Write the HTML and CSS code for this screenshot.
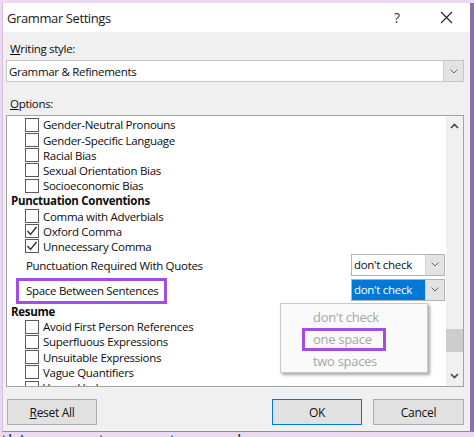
FILE: index.html
```html
<!DOCTYPE html>
<html>
<head>
<meta charset="utf-8">
<title>Grammar Settings</title>
<link rel="stylesheet" href="styles.css">
</head>
<body>
<div class="dialog">
  <div class="titlebar">
    <span class="title">Grammar Settings</span>
    <span class="help">?</span>
    <svg class="close" width="13" height="13" viewBox="0 0 13 13"><path d="M1 1L12 12M12 1L1 12" stroke="#222" stroke-width="1.1" fill="none"/></svg>
  </div>
  <div class="content">
    <div class="label label-style"><u>W</u>riting style:</div>
    <div class="select">
      <span class="select-text">Grammar &amp; Refinements</span>
      <span class="select-btn"><svg width="8" height="5" viewBox="0 0 8 5"><path d="M0.5 0.5L4 4L7.5 0.5" stroke="#666" stroke-width="1" fill="none"/></svg></span>
    </div>
    <div class="label label-options"><u>O</u>ptions:</div>
    <div class="listbox">
      <div class="list">
        <div class="row"><span class="cb"></span>Gender-Neutral Pronouns</div>
        <div class="row"><span class="cb"></span>Gender-Specific Language</div>
        <div class="row"><span class="cb"></span>Racial Bias</div>
        <div class="row"><span class="cb"></span>Sexual Orientation Bias</div>
        <div class="row"><span class="cb"></span>Socioeconomic Bias</div>
        <div class="row heading">Punctuation Conventions</div>
        <div class="row"><span class="cb"></span>Comma with Adverbials</div>
        <div class="row"><span class="cb"><svg width="12" height="12" viewBox="0 0 12 12"><path d="M1.5 6L4.5 9.5L10.5 2" stroke="#333" stroke-width="1.4" fill="none"/></svg></span>Oxford Comma</div>
        <div class="row"><span class="cb"><svg width="12" height="12" viewBox="0 0 12 12"><path d="M1.5 6L4.5 9.5L10.5 2" stroke="#333" stroke-width="1.4" fill="none"/></svg></span>Unnecessary Comma</div>
        <div class="row combo-row">
          <span class="combo-label">Punctuation Required With Quotes</span>
          <span class="combo"><span class="combo-text">don't check</span><span class="combo-btn"><svg width="8" height="5" viewBox="0 0 8 5"><path d="M0.5 0.5L4 4L7.5 0.5" stroke="#666" stroke-width="1" fill="none"/></svg></span></span>
        </div>
        <div class="row combo-row">
          <span class="combo-label highlight">Space Between Sentences</span>
          <span class="combo"><span class="combo-text selected">don't check</span><span class="combo-btn"><svg width="8" height="5" viewBox="0 0 8 5"><path d="M0.5 0.5L4 4L7.5 0.5" stroke="#666" stroke-width="1" fill="none"/></svg></span></span>
        </div>
        <div class="row heading">Resume</div>
        <div class="row"><span class="cb"></span>Avoid First Person References</div>
        <div class="row"><span class="cb"></span>Superfluous Expressions</div>
        <div class="row"><span class="cb"></span>Unsuitable Expressions</div>
        <div class="row"><span class="cb"></span>Vague Quantifiers</div>
        <div class="row"><span class="cb"></span>Vague Hedges</div>
      </div>
      <div class="scrollbar">
        <span class="arrow"><svg width="9" height="6" viewBox="0 0 9 6"><path d="M1 5L4.5 1.5L8 5" stroke="#444" stroke-width="1.6" fill="none"/></svg></span>
        <span class="thumb"></span>
        <span class="arrow arrow-down"><svg width="9" height="6" viewBox="0 0 9 6"><path d="M1 1L4.5 4.5L8 1" stroke="#444" stroke-width="1.6" fill="none"/></svg></span>
      </div>
      <div class="popup">
        <div class="popup-item"><span>don't check</span></div>
        <div class="popup-item"><span class="hl">one space</span></div>
        <div class="popup-item"><span>two spaces</span></div>
      </div>
    </div>
    <div class="buttons">
      <button class="btn btn-reset"><u>R</u>eset All</button>
      <button class="btn btn-ok">OK</button>
      <button class="btn btn-cancel">Cancel</button>
    </div>
  </div>
</div>
<div class="underlay">this prompt errors to you due</div>
</body>
</html>
```

FILE: styles.css
```css
html, body {
  margin: 0;
  padding: 0;
}
body {
  width: 474px;
  height: 437px;
  overflow: hidden;
  background: #ead9f1;
  font-family: "Open Sans", "Noto Sans", sans-serif;
  color: #0d0d0d;
}
.dialog {
  margin: 3px 0 0 2px;
  width: 467px;
  height: 428px;
  border-left: 1px solid #d4c0e0;
  border-right: 4px solid #8e70a9;
  border-bottom: 1px solid #9a7fb6;
  background: #f0f0f0;
  display: flex;
  flex-direction: column;
}
.titlebar {
  height: 29px;
  background: #fff;
  display: flex;
  align-items: center;
  flex-shrink: 0;
}
.title {
  margin-left: 4px;
  font-size: 13px;
  letter-spacing: -0.4px;
  color: #1a1a1a;
  flex: 1;
}
.help {
  font-size: 14px;
  color: #333;
  margin-right: 40px;
}
.close {
  margin-right: 17px;
}
.content {
  padding: 0 6px 0 3px;
  display: flex;
  flex-direction: column;
}
.label {
  font-size: 11.5px;
  letter-spacing: -0.3px;
  line-height: 16px;
  height: 16px;
  margin-left: 4px;
}
.label-style {
  margin-top: 9px;
  margin-bottom: 3px;
}
.label-options {
  margin-top: 14px;
  margin-bottom: 3px;
}
.select {
  height: 22px;
  box-sizing: border-box;
  border: 1px solid #c4c4c4;
  background: #fff;
  display: flex;
  align-items: center;
}
.select-text {
  flex: 1;
  font-size: 11.5px;
  letter-spacing: -0.3px;
  padding-left: 2px;
}
.select-btn {
  width: 19px;
  height: 20px;
  background: #e3e3e3;
  border-left: 1px solid #cfcfcf;
  display: flex;
  align-items: center;
  justify-content: center;
}
.listbox {
  position: relative;
  height: 272px;
  box-sizing: border-box;
  border: 1px solid #a3a3a3;
  background: #fff;
  display: flex;
}
.list {
  flex: 1;
  overflow: hidden;
  padding-top: 1.3px;
}
.row {
  height: 15.2px;
  display: flex;
  align-items: center;
  font-size: 11.5px;
  letter-spacing: -0.3px;
  white-space: nowrap;
}
.cb {
  width: 14px;
  height: 14px;
  box-sizing: border-box;
  border: 1px solid #5a5a5a;
  background: #fff;
  margin-left: 18px;
  margin-right: 4px;
  display: flex;
  align-items: center;
  justify-content: center;
  flex-shrink: 0;
}
.heading {
  font-weight: bold;
  padding-left: 4px;
}
.combo-row {
  height: 25px;
  align-items: flex-start;
}
.combo-label {
  margin-top: 4px;
  padding-left: 19px;
}
.combo-label.highlight {
  margin-top: -1px;
  margin-left: 9px;
  padding-left: 7px;
  width: 151px;
  height: 26px;
  box-sizing: border-box;
  border: 3px solid #a04ee6;
  line-height: 19px;
}
.combo {
  margin-left: auto;
  margin-right: 1px;
  width: 94px;
  height: 22px;
  box-sizing: border-box;
  border: 1px solid #b3b3b3;
  background: #fff;
  display: flex;
}
.combo-text {
  flex: 1;
  font-size: 11.5px;
  letter-spacing: -0.3px;
  line-height: 20px;
  padding-left: 2px;
}
.combo-text.selected {
  background: #0078d7;
  color: #fff;
}
.combo-btn {
  width: 18px;
  background: #e3e3e3;
  border-left: 1px solid #d4d4d4;
  display: flex;
  align-items: center;
  justify-content: center;
}
.scrollbar {
  width: 17px;
  background: #f0f0f0;
  display: flex;
  flex-direction: column;
  align-items: center;
}
.arrow {
  height: 20px;
  display: flex;
  align-items: center;
  justify-content: center;
}
.arrow-down {
  margin-top: auto;
}
.thumb {
  margin-top: 193px;
  width: 17px;
  height: 23px;
  background: #cdcdcd;
}
.popup {
  position: absolute;
  left: 273px;
  top: 187px;
  width: 148px;
  height: 70px;
  box-sizing: border-box;
  padding-top: 2px;
  background: #fafafa;
  border: 1px solid #cacaca;
  box-shadow: 2px 2px 3px rgba(0, 0, 0, 0.35);
}
.popup-item {
  height: 22px;
  padding-left: 21px;
  font-size: 13px;
  letter-spacing: -0.3px;
  color: #a6a6a6;
  white-space: nowrap;
}
.popup-item span {
  display: inline-block;
  height: 23px;
  box-sizing: border-box;
  border: 3px solid transparent;
  padding-left: 8px;
  line-height: 16px;
}
.popup-item .hl {
  width: 84px;
  border-color: #a04ee6;
}
.buttons {
  margin-top: 12px;
  display: flex;
}
.btn {
  height: 26px;
  width: 90px;
  box-sizing: border-box;
  border: 1px solid #adadad;
  background: #e1e1e1;
  font-family: "Open Sans", "Noto Sans", sans-serif;
  font-size: 12px;
  letter-spacing: -0.3px;
  color: #111;
  padding: 0;
}
.btn-reset {
  margin-left: 1px;
}
.btn-ok {
  margin-left: auto;
  border-color: #0078d7;
}
.btn-cancel {
  margin-left: 11px;
  width: 91px;
}
.underlay {
  margin-top: 0;
  padding-left: 1px;
  font-size: 19px;
  line-height: 19px;
  color: #2c2c5c;
  white-space: nowrap;
}
```
